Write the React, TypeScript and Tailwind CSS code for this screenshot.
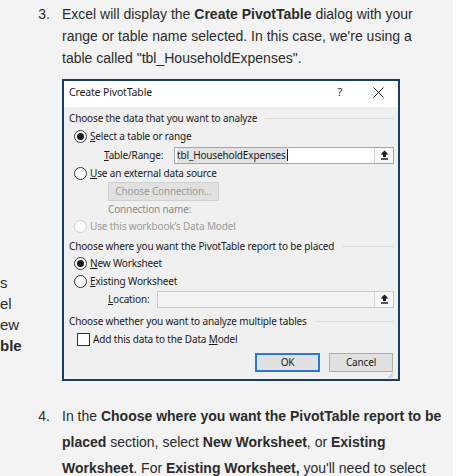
import React from 'react';

const ui = { fontFamily: '"Noto Sans", "Open Sans", sans-serif' };
const body = { fontFamily: '"Liberation Sans", Arial, sans-serif' };

const Radio: React.FC<{ checked?: boolean; disabled?: boolean }> = ({ checked, disabled }) => (
  <span
    className={`flex h-[13px] w-[13px] shrink-0 items-center justify-center rounded-full border bg-white ${
      disabled ? 'border-[#cfcfcf] bg-[#f4f4f4]' : 'border-[#333]'
    }`}
  >
    {checked && <span className="h-[7px] w-[7px] rounded-full bg-[#1a1a1a]" />}
  </span>
);

const Heading: React.FC<{ children: React.ReactNode }> = ({ children }) => (
  <div className="flex h-[18px] items-center gap-2">
    <span className="whitespace-nowrap">{children}</span>
    <span className="h-px flex-1 bg-[#dcdcdc]" />
  </div>
);

const PickButton = () => (
  <span className="flex h-full w-[19px] items-center justify-center border-l border-[#d6d6d6] bg-[#f7f7f7]">
    <svg width="9" height="10" viewBox="0 0 9 10">
      <path d="M4.5 0.5 L8.5 4.5 H6 V7 H3 V4.5 H0.5 Z" fill="#1a1a1a" />
      <rect x="1" y="8.2" width="7" height="1.5" fill="#1a1a1a" />
    </svg>
  </span>
);

const Dialog = () => (
  <div
    className="flex w-[338px] flex-col border-2 border-[#1d3d60] bg-[#f0f0f0] text-[10px] tracking-[-0.15px] text-[#1a1a1a]"
    style={ui}
  >
    <div className="flex h-[26px] items-center bg-white pb-[3px] pl-[5px]">
      <span className="text-[10.5px]">Create PivotTable</span>
      <span className="ml-auto mr-[31px] text-[11px]">?</span>
      <svg width="11" height="11" viewBox="0 0 11 11" className="mr-[14px]">
        <path d="M0.5 0.5 L10.5 10.5 M10.5 0.5 L0.5 10.5" stroke="#1a1a1a" strokeWidth="1" />
      </svg>
    </div>
    <div className="flex flex-col pl-[5px] pr-[4px] pt-[2px]">
      <Heading>Choose the data that you want to analyze</Heading>
      <div className="flex h-[18px] items-center gap-[3px] pl-[5px]">
        <Radio checked />
        <span>
          <u>S</u>elect a table or range
        </span>
      </div>
      <div className="mt-[1px] flex h-[18px] items-center pl-[35px]">
        <span className="w-[70px]">
          <u>T</u>able/Range:
        </span>
        <div className="flex h-[17px] flex-1 items-center border border-[#a5a5a5] bg-white">
          <span className="ml-[2px] bg-[#e3e3e3] pr-px">tbl_HouseholdExpenses</span>
          <span className="h-[12px] w-px bg-[#111]" />
          <span className="ml-auto h-full">
            <PickButton />
          </span>
        </div>
      </div>
      <div className="flex h-[18px] items-center gap-[3px] pl-[5px]">
        <Radio />
        <span>
          <u>U</u>se an external data source
        </span>
      </div>
      <div className="flex h-[19px] items-stretch pl-[39px]">
        <span className="flex w-[111px] items-center justify-center whitespace-nowrap border border-[#d0d0d0] bg-[#e1e1e1] text-[#9a9a9a]">
          Choose Connection...
        </span>
      </div>
      <div className="flex h-[16px] items-center pl-[39px] text-[#8a8a8a]">Connection name:</div>
      <div className="flex h-[18px] items-center gap-[3px] pl-[5px] text-[#9a9a9a]">
        <Radio disabled />
        <span>Use this workbook’s Data Model</span>
      </div>
      <div className="mt-[2px]">
        <Heading>Choose where you want the PivotTable report to be placed</Heading>
      </div>
      <div className="flex h-[17px] items-center gap-[3px] pl-[5px]">
        <Radio checked />
        <span>
          <u>N</u>ew Worksheet
        </span>
      </div>
      <div className="flex h-[18px] items-center gap-[3px] pl-[5px]">
        <Radio />
        <span>
          <u>E</u>xisting Worksheet
        </span>
      </div>
      <div className="flex h-[18px] items-center pl-[39px]">
        <span className="w-[49px]">
          <u>L</u>ocation:
        </span>
        <div className="flex h-[17px] flex-1 items-center border border-[#c8c8c8] bg-[#f4f4f4]">
          <span className="ml-auto h-full">
            <PickButton />
          </span>
        </div>
      </div>
      <div className="mt-[4px]">
        <Heading>Choose whether you want to analyze multiple tables</Heading>
      </div>
      <div className="flex h-[18px] items-center gap-[3px] pl-[8px]">
        <span className="h-[13px] w-[13px] border border-[#333] bg-white" />
        <span>
          Add this data to the Data <u>M</u>odel
        </span>
      </div>
      <div className="mt-[5px] flex justify-end gap-[9px] pr-px">
        <span className="flex h-[19px] w-[65px] items-center justify-center border-2 border-[#2a78d6] bg-[#e1e1e1]">OK</span>
        <span className="flex h-[19px] w-[64px] items-center justify-center border border-[#adadad] bg-[#e1e1e1]">Cancel</span>
      </div>
      <div className="flex h-[7px] justify-end">
        <svg width="7" height="7" viewBox="0 0 7 7">
          <path d="M6 1 L1 6 M6 3.5 L3.5 6" stroke="#b5b5b5" strokeWidth="1" />
        </svg>
      </div>
    </div>
  </div>
);

export default function App() {
  return (
    <div className="flex h-[476px] w-[474px] overflow-hidden bg-white" style={body}>
      <div className="flex w-[453px] shrink-0 flex-col bg-[#f3f3f3] pt-[3px] text-[14px] text-[#2b2b2b]">
        <div className="flex leading-[22px]">
          <span className="w-[50px] shrink-0 text-right">3.</span>
          <p className="ml-[12px] w-[370px]">
            Excel will display the <b>Create PivotTable</b> dialog with your range or table name selected. In this case, we're
            using a table called "tbl_HouseholdExpenses".
          </p>
        </div>
        <div className="mt-[10px] flex">
          <div className="flex w-[62px] shrink-0 flex-col overflow-hidden pt-[193px] text-[15px] leading-[21px]">
            <span>s</span>
            <span>el</span>
            <span>ew</span>
            <b>ble</b>
          </div>
          <Dialog />
        </div>
        <div className="mt-[22px] flex leading-[26px]">
          <span className="w-[50px] shrink-0 text-right">4.</span>
          <p className="ml-[12px] w-[380px]">
            In the <b>Choose where you want the PivotTable report to be placed</b> section, select <b>New Worksheet</b>, or{' '}
            <b>Existing Worksheet</b>. For <b>Existing Worksheet,</b> you'll need to select
          </p>
        </div>
      </div>
    </div>
  );
}
